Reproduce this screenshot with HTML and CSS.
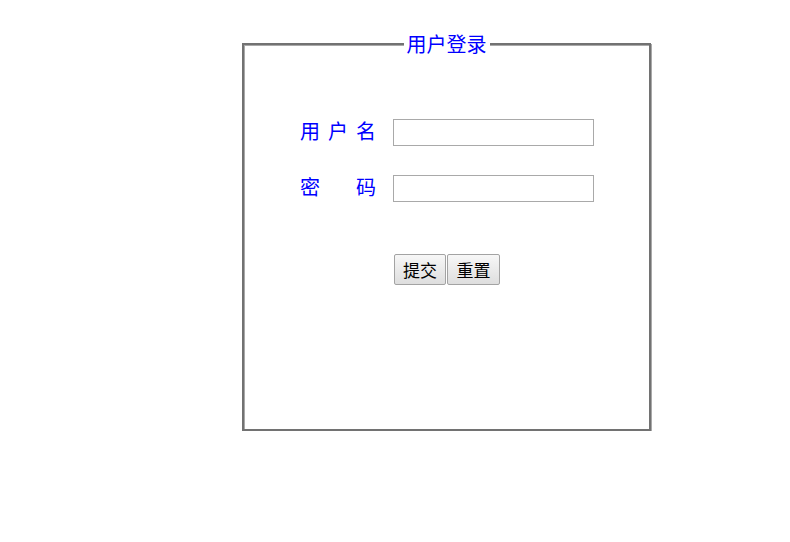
FILE: index.html
```html
<!DOCTYPE html>
<html lang="zh-CN">
<head>
<meta charset="utf-8">
<title>用户登录</title>
<link rel="stylesheet" href="styles.css">
</head>
<body>
<form class="login">
  <fieldset class="box">
    <legend class="title">用户登录</legend>
    <div class="rows">
      <div class="row">
        <label class="label" for="user"><span>用</span><span>户</span><span>名</span></label>
        <input class="field" id="user" type="text">
      </div>
      <div class="row">
        <label class="label" for="pwd"><span>密</span><span>码</span></label>
        <input class="field" id="pwd" type="password">
      </div>
      <div class="actions">
        <button class="btn" type="submit">提交</button>
        <button class="btn btn-wide" type="reset">重置</button>
      </div>
    </div>
  </fieldset>
</form>
</body>
</html>
```
FILE: styles.css
```css
html, body {
  margin: 0;
  padding: 0;
  background: #ffffff;
}
body {
  font-family: "Noto Sans CJK SC", "Noto Sans", sans-serif;
}
.login {
  padding: 31px 0 0 242px;
}
.box {
  box-sizing: border-box;
  width: 409px;
  height: 400px;
  margin: 0;
  padding: 0;
  border: 2px solid #727272;
  box-shadow: inset 1px 1px 0 #a9a9a9, 1px 1px 0 #a9a9a9;
}
.title {
  margin: 0 auto;
  padding: 0 3px;
  background: #ffffff;
  color: #0000ff;
  font-size: 20px;
  line-height: 26px;
}
.rows {
  padding: 62px 0 0 56px;
}
.row {
  display: flex;
  align-items: center;
  gap: 17px;
  height: 27px;
  margin-bottom: 29px;
}
.label {
  box-sizing: border-box;
  width: 76px;
  height: 27px;
  padding-bottom: 4px;
  display: flex;
  justify-content: space-between;
  color: #0000ff;
  font-size: 20px;
  line-height: 23px;
}
.field {
  box-sizing: border-box;
  width: 201px;
  height: 27px;
  margin: 0;
  border: 1px solid #a9a9a9;
  padding: 0 3px;
  background: #ffffff;
}
.actions {
  display: flex;
  gap: 1px;
  margin: 52px 0 0 94px;
}
.btn {
  box-sizing: border-box;
  width: 52px;
  height: 31px;
  margin: 0;
  padding: 0;
  border: 1px solid #a3a3a3;
  border-radius: 2px;
  background: linear-gradient(#f7f7f7, #dedede);
  color: #000000;
  font-family: "Noto Sans CJK SC", sans-serif;
  font-size: 17px;
  line-height: 29px;
}
.btn-wide {
  width: 53px;
}
```
